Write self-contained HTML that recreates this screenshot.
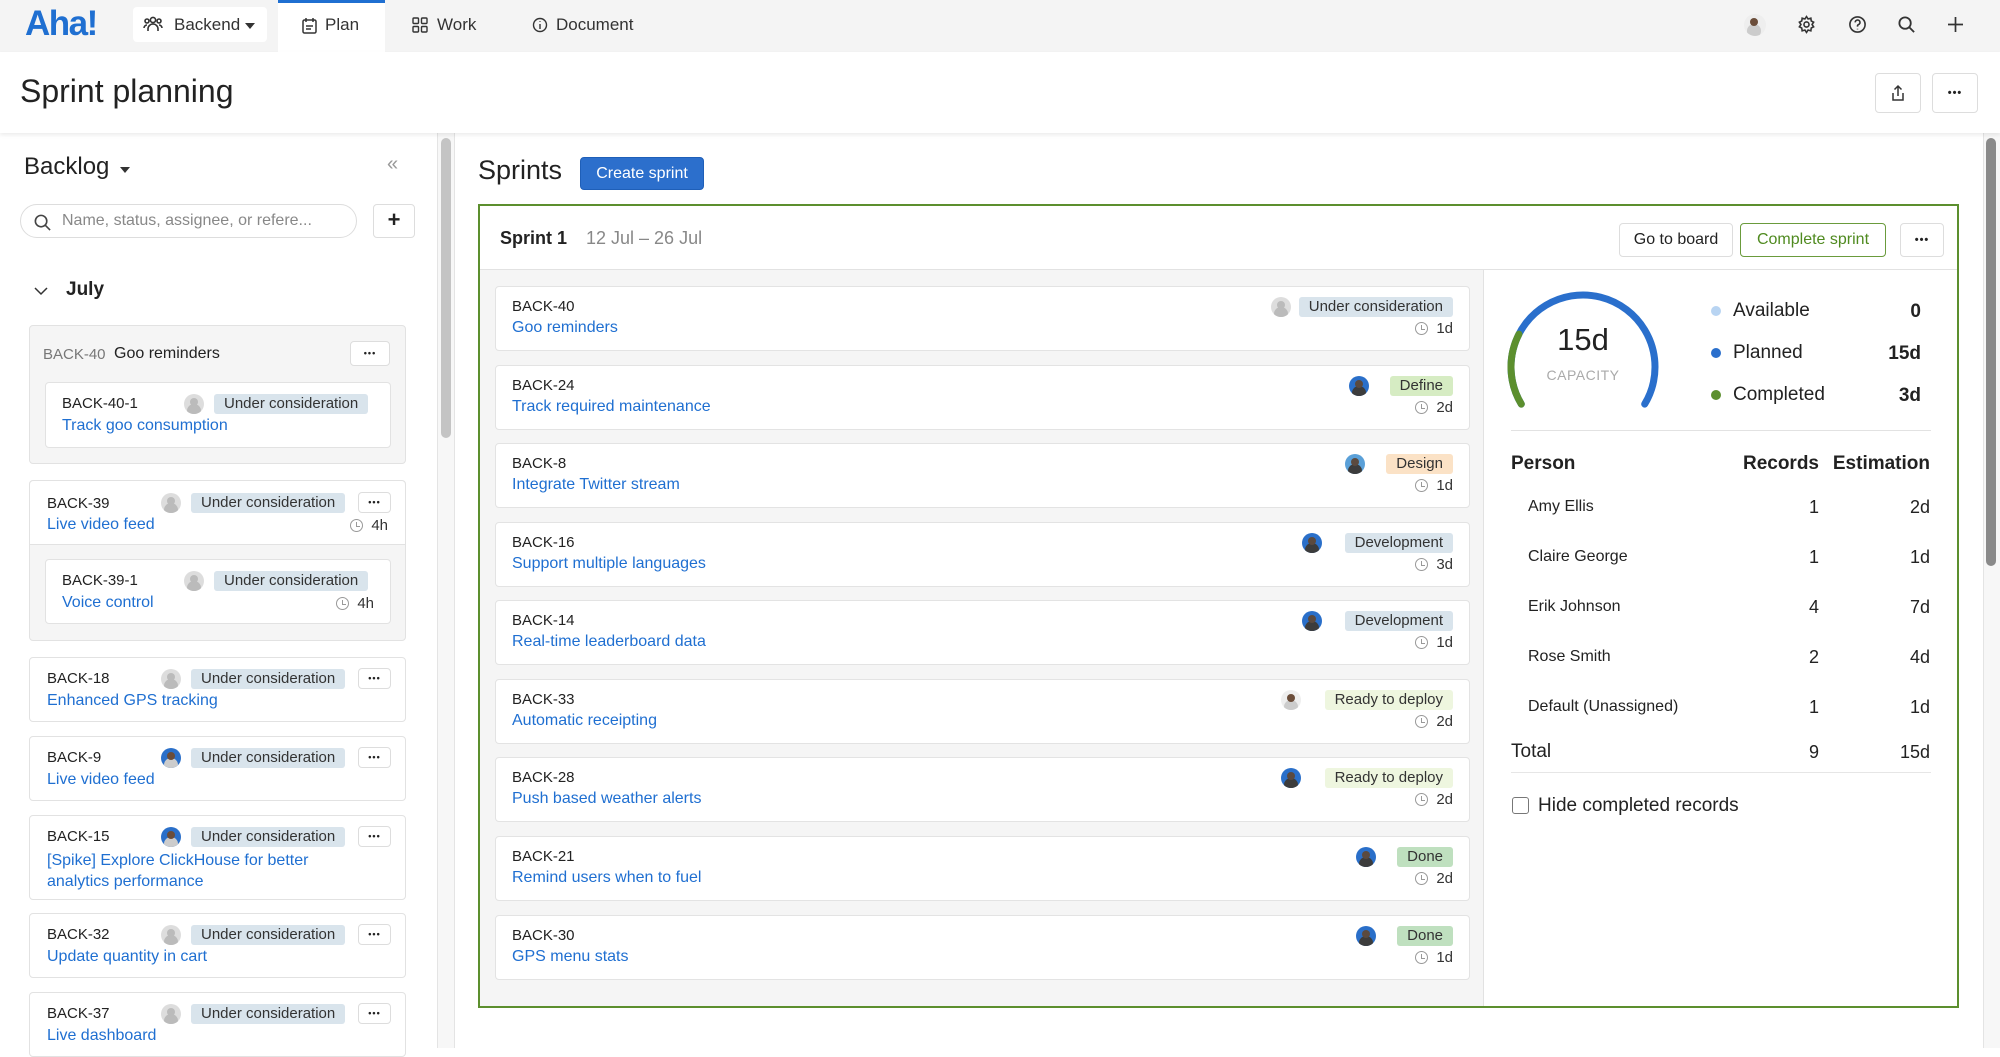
<!DOCTYPE html>
<html><head><meta charset="utf-8">
<style>
*{box-sizing:border-box;margin:0;padding:0}
body{width:2000px;height:1048px;overflow:hidden;background:#fff;font-family:"Liberation Sans",Arial,sans-serif;color:#222;position:relative}
.a{position:absolute}
.nav{left:0;top:0;width:2000px;height:52px;background:#f4f4f4}
.navt{font-size:17px;color:#333;top:15px}
.hdr{left:0;top:52px;width:2000px;height:81px;background:#fff;box-shadow:0 2px 4px rgba(0,0,0,.08);z-index:2}
.ibtn{border:1px solid #ddd;border-radius:4px;background:#fff;width:46px;height:40px;display:flex;align-items:center;justify-content:center}
.left{left:0;top:133px;width:437px;height:915px;background:#fff}
.link{color:#1f6fd1}
.pill{position:absolute;height:20px;line-height:20px;border-radius:3px;font-size:15px;padding:0 10px;color:#333;white-space:nowrap}
.uc{background:#d9e4ec}.def{background:#d6ecc3}.des{background:#fbe2c6}.rd{background:#eef6df}.dn{background:#bfe0bf}
.av{position:absolute;width:20px;height:20px;border-radius:50%;background:#ddd;overflow:hidden}
.av::after{content:"";position:absolute;left:6px;top:4px;width:8px;height:8px;border-radius:50%;background:#bbb;box-shadow:0 9px 0 3px #bbb}
.av.c{background:#2a6fc9}.av.c::after{background:#5b4a3f;box-shadow:0 9px 0 3px #3c3c3c}
.av.w{background:#eee}.av.w::after{background:#6b4d3a;box-shadow:0 9px 0 3px #ccc}
.dots{position:absolute;width:33px;height:21px;border:1px solid #ddd;border-radius:4px;background:#fff;font-size:9px;line-height:19px;text-align:center;font-weight:bold;letter-spacing:1px}
.bcard{position:absolute;left:29px;width:377px;border:1px solid #e2e2e2;border-radius:4px;background:#fff}
.id{position:absolute;font-size:15px;color:#222}
.tt{position:absolute;font-size:16px;color:#1f6fd1}
.tm{position:absolute;font-size:15px;color:#333;display:flex;align-items:center;gap:8px}
.clk{width:13px;height:13px;border:1.3px solid #999;border-radius:50%;position:relative}
.clk::after{content:"";position:absolute;left:4.5px;top:1.5px;width:3px;height:4px;border-left:1.3px solid #999;border-bottom:1.3px solid #999}
.scard{position:absolute;left:495px;width:975px;height:65px;background:#fff;border:1px solid #e3e3e3;border-radius:4px}
.scard .id{left:16px;top:11px}
.scard .tt{left:16px;top:32px}
.scard .pill{right:16px;top:10px}
.scard .tm{right:16px;top:33px}
.row{position:absolute;font-size:16px;color:#222}
</style></head><body>

<div class="a nav">
  <div class="a" style="left:25px;top:4px;font-size:35px;font-weight:bold;color:#1f6fd1;letter-spacing:-1.5px">Aha!</div>
  <div class="a" style="left:133px;top:7px;width:134px;height:35px;background:#fff;border-radius:4px"></div>
  <svg class="a" style="left:143px;top:15px" width="20" height="18" viewBox="0 0 20 18" fill="none" stroke="#333" stroke-width="1.6"><circle cx="10" cy="5" r="2.6"/><circle cx="4" cy="6" r="2"/><circle cx="16" cy="6" r="2"/><path d="M5 16v-2a5 5 0 0 1 10 0v2M1 13a3 3 0 0 1 3-3M19 13a3 3 0 0 0-3-3"/></svg>
  <div class="a navt" style="left:174px">Backend</div>
  <div class="a" style="left:245px;top:23px;border:5px solid transparent;border-top:6px solid #333"></div>
  <div class="a" style="left:278px;top:0;width:107px;height:52px;background:#fff;border-top:3px solid #1f6fd1"></div>
  <svg class="a" style="left:302px;top:17px" width="15" height="17" viewBox="0 0 15 17" fill="none" stroke="#333" stroke-width="1.5"><rect x="1" y="3" width="13" height="13" rx="1.5"/><path d="M4 1v4M11 1v4M4 9h7M4 12h5"/></svg>
  <div class="a navt" style="left:325px">Plan</div>
  <svg class="a" style="left:412px;top:17px" width="16" height="16" viewBox="0 0 16 16" fill="none" stroke="#333" stroke-width="1.4"><rect x="1" y="1" width="5.5" height="5.5" rx="1"/><rect x="9.5" y="1" width="5.5" height="5.5" rx="1"/><rect x="1" y="9.5" width="5.5" height="5.5" rx="1"/><rect x="9.5" y="9.5" width="5.5" height="5.5" rx="1"/></svg>
  <div class="a navt" style="left:437px">Work</div>
  <svg class="a" style="left:532px;top:17px" width="16" height="16" viewBox="0 0 16 16" fill="none" stroke="#333" stroke-width="1.4"><circle cx="8" cy="8" r="6.5"/><path d="M8 7v5M8 4.2v.8"/></svg>
  <div class="a navt" style="left:556px">Document</div>
  <div class="av w" style="left:1744px;top:14px;width:22px;height:22px"></div>
  <svg class="a" style="left:1797px;top:15px" width="19" height="19" viewBox="0 0 24 24" fill="none" stroke="#333" stroke-width="2"><circle cx="12" cy="12" r="3.2"/><path d="M12 2l2 3 3.5-1 .5 3.5L21 9l-2 3 2 3-3 1.5-.5 3.5-3.5-1-2 3-2-3-3.5 1L6 16.5 3 15l2-3-2-3 3-1.5L6.5 4 10 5z"/></svg>
  <svg class="a" style="left:1848px;top:15px" width="19" height="19" viewBox="0 0 20 20" fill="none" stroke="#333" stroke-width="1.7"><circle cx="10" cy="10" r="8"/><path d="M7.6 7.8a2.5 2.5 0 1 1 3.4 2.3c-.7.3-1 .8-1 1.5v.6M10 14.5v.6"/></svg>
  <svg class="a" style="left:1897px;top:15px" width="19" height="19" viewBox="0 0 20 20" fill="none" stroke="#333" stroke-width="1.9"><circle cx="8.5" cy="8.5" r="6"/><path d="M13 13l5 5"/></svg>
  <svg class="a" style="left:1947px;top:16px" width="17" height="17" viewBox="0 0 17 17" fill="none" stroke="#333" stroke-width="1.7"><path d="M8.5 1v15M1 8.5h15"/></svg>
</div>

<div class="a hdr">
  <div class="a" style="left:20px;top:21px;font-size:32px;color:#222">Sprint planning</div>
  <div class="a ibtn" style="left:1875px;top:21px"><svg width="16" height="18" viewBox="0 0 16 18" fill="none" stroke="#333" stroke-width="1.5"><path d="M8 12V2M4.5 5.5L8 2l3.5 3.5M3 9v7h10V9"/></svg></div>
  <div class="a ibtn" style="left:1932px;top:21px;font-weight:bold;font-size:11px;letter-spacing:1px">•••</div>
</div>

<div class="a left">
  <div class="a" style="left:24px;top:20px;font-size:24px">Backlog</div>
  <div class="a" style="left:120px;top:34px;border:5px solid transparent;border-top:6px solid #333"></div>
  <div class="a" style="left:387px;top:20px;font-size:20px;color:#999">«</div>
  <div class="a" style="left:20px;top:71px;width:337px;height:34px;border:1px solid #ddd;border-radius:17px"></div>
  <svg class="a" style="left:33px;top:80px" width="19" height="19" viewBox="0 0 20 20" fill="none" stroke="#444" stroke-width="1.7"><circle cx="8.5" cy="8.5" r="6"/><path d="M13 13l5 5"/></svg>
  <div class="a" style="left:62px;top:79px;font-size:16px;color:#888">Name, status, assignee, or refere...</div>
  <div class="a" style="left:373px;top:71px;width:42px;height:34px;border:1px solid #ddd;border-radius:4px;text-align:center;font-size:22px;line-height:30px;font-weight:bold">+</div>
  <svg class="a" style="left:34px;top:153px" width="14" height="10" viewBox="0 0 14 10" fill="none" stroke="#333" stroke-width="1.5"><path d="M1 2l6 6 6-6"/></svg>
  <div class="a" style="left:66px;top:146px;font-size:19px;font-weight:bold">July</div>
</div>

<div class="bcard" style="top:325px;height:139px;background:#f5f5f5">
  <div class="id" style="left:13px;top:20px;color:#777">BACK-40</div>
  <div class="a" style="left:84px;top:19px;font-size:16px">Goo reminders</div>
  <div class="dots" style="left:320px;top:15px;height:25px;width:40px;line-height:23px">•••</div>
  <div class="a" style="left:15px;top:56px;width:346px;height:66px;background:#fff;border:1px solid #e2e2e2;border-radius:4px">
    <div class="id" style="left:16px;top:12px">BACK-40-1</div>
    <div class="tt" style="left:16px;top:34px">Track goo consumption</div>
    <div class="av" style="left:138px;top:11px"></div>
    <div class="pill uc" style="left:168px;top:11px">Under consideration</div>
  </div>
</div>
<div class="bcard" style="top:480px;height:161px;background:#f5f5f5">
  <div class="a" style="left:0;top:0;width:375px;height:64px;background:#fff;border-bottom:1px solid #e2e2e2;border-radius:4px 4px 0 0"></div>
  <div class="id" style="left:17px;top:14px">BACK-39</div>
  <div class="tt" style="left:17px;top:35px">Live video feed</div>
  <div class="av" style="left:131px;top:12px"></div>
  <div class="pill uc" style="left:161px;top:12px">Under consideration</div>
  <div class="dots" style="left:328px;top:11px">•••</div>
  <div class="tm" style="right:17px;top:36px"><span class="clk"></span>4h</div>
  <div class="a" style="left:15px;top:78px;width:346px;height:65px;background:#fff;border:1px solid #e2e2e2;border-radius:4px">
    <div class="id" style="left:16px;top:12px">BACK-39-1</div>
    <div class="tt" style="left:16px;top:34px">Voice control</div>
    <div class="av" style="left:138px;top:11px"></div>
    <div class="pill uc" style="left:168px;top:11px">Under consideration</div>
    <div class="tm" style="right:16px;top:35px"><span class="clk"></span>4h</div>
  </div>
</div>
<div class="bcard" style="top:657px;height:65px">
  <div class="id" style="left:17px;top:12px">BACK-18</div><div class="tt" style="left:17px;top:34px">Enhanced GPS tracking</div>
  <div class="av" style="left:131px;top:11px"></div><div class="pill uc" style="left:161px;top:11px">Under consideration</div><div class="dots" style="left:328px;top:10px">•••</div>
</div>
<div class="bcard" style="top:736px;height:65px">
  <div class="id" style="left:17px;top:12px">BACK-9</div><div class="tt" style="left:17px;top:34px">Live video feed</div>
  <div class="av w" style="left:131px;top:11px;background:#2a6fc9"></div><div class="pill uc" style="left:161px;top:11px">Under consideration</div><div class="dots" style="left:328px;top:10px">•••</div>
</div>
<div class="bcard" style="top:815px;height:85px">
  <div class="id" style="left:17px;top:12px">BACK-15</div><div class="tt" style="left:17px;top:34px;line-height:21px">[Spike] Explore ClickHouse for better<br>analytics performance</div>
  <div class="av w" style="left:131px;top:11px;background:#2a6fc9"></div><div class="pill uc" style="left:161px;top:11px">Under consideration</div><div class="dots" style="left:328px;top:10px">•••</div>
</div>
<div class="bcard" style="top:913px;height:65px">
  <div class="id" style="left:17px;top:12px">BACK-32</div><div class="tt" style="left:17px;top:34px">Update quantity in cart</div>
  <div class="av" style="left:131px;top:11px"></div><div class="pill uc" style="left:161px;top:11px">Under consideration</div><div class="dots" style="left:328px;top:10px">•••</div>
</div>
<div class="bcard" style="top:992px;height:65px">
  <div class="id" style="left:17px;top:12px">BACK-37</div><div class="tt" style="left:17px;top:34px">Live dashboard</div>
  <div class="av" style="left:131px;top:11px"></div><div class="pill uc" style="left:161px;top:11px">Under consideration</div><div class="dots" style="left:328px;top:10px">•••</div>
</div>

<div class="a" style="left:437px;top:133px;width:18px;height:915px;background:#f7f7f7;border-left:1px solid #e4e4e4;border-right:1px solid #e4e4e4"></div>
<div class="a" style="left:441px;top:138px;width:10px;height:300px;background:#c4c4c4;border-radius:5px"></div>
<div class="a" style="left:1983px;top:133px;width:17px;height:915px;background:#f7f7f7;border-left:1px solid #e4e4e4"></div>
<div class="a" style="left:1986px;top:138px;width:10px;height:428px;background:#8a8a8a;border-radius:5px"></div>

<div class="a" style="left:478px;top:155px;font-size:27px">Sprints</div>
<div class="a" style="left:580px;top:157px;width:124px;height:33px;background:#2c6fcc;border:1px solid #1f5fb8;border-radius:4px;color:#fff;font-size:16px;text-align:center;line-height:31px">Create sprint</div>

<div class="a" style="left:478px;top:204px;width:1481px;height:804px;border:2px solid #5c8f2e;background:#fff"></div>
<div class="a" style="left:480px;top:269px;width:1477px;height:1px;background:#e2e2e2"></div>
<div class="a" style="left:480px;top:270px;width:1004px;height:736px;background:#f5f5f5;border-right:1px solid #e2e2e2"></div>
<div class="a" style="left:500px;top:228px;font-size:18px;font-weight:bold">Sprint 1</div>
<div class="a" style="left:586px;top:228px;font-size:18px;color:#888">12 Jul – 26 Jul</div>
<div class="a" style="left:1619px;top:223px;width:114px;height:34px;border:1px solid #ddd;border-radius:4px;font-size:16px;text-align:center;line-height:32px">Go to board</div>
<div class="a" style="left:1740px;top:223px;width:146px;height:34px;border:1.5px solid #6a9b3c;border-radius:4px;font-size:16px;text-align:center;line-height:31px;color:#4f8a1f">Complete sprint</div>
<div class="a" style="left:1900px;top:223px;width:44px;height:34px;border:1px solid #ddd;border-radius:4px;font-size:11px;text-align:center;line-height:32px;font-weight:bold;letter-spacing:1px">•••</div>

<div class="scard" style="top:286px"><div class="id">BACK-40</div><div class="tt">Goo reminders</div><div class="av" style="right:178px;top:10px"></div><div class="pill uc">Under consideration</div><div class="tm"><span class="clk"></span>1d</div></div>
<div class="scard" style="top:365px"><div class="id">BACK-24</div><div class="tt">Track required maintenance</div><div class="av c" style="right:100px;top:10px"></div><div class="pill def">Define</div><div class="tm"><span class="clk"></span>2d</div></div>
<div class="scard" style="top:443px"><div class="id">BACK-8</div><div class="tt">Integrate Twitter stream</div><div class="av c" style="right:104px;top:10px;background:#5aa0d8"></div><div class="pill des">Design</div><div class="tm"><span class="clk"></span>1d</div></div>
<div class="scard" style="top:522px"><div class="id">BACK-16</div><div class="tt">Support multiple languages</div><div class="av c" style="right:147px;top:10px"></div><div class="pill uc">Development</div><div class="tm"><span class="clk"></span>3d</div></div>
<div class="scard" style="top:600px"><div class="id">BACK-14</div><div class="tt">Real-time leaderboard data</div><div class="av c" style="right:147px;top:10px"></div><div class="pill uc">Development</div><div class="tm"><span class="clk"></span>1d</div></div>
<div class="scard" style="top:679px"><div class="id">BACK-33</div><div class="tt">Automatic receipting</div><div class="av w" style="right:168px;top:10px"></div><div class="pill rd">Ready to deploy</div><div class="tm"><span class="clk"></span>2d</div></div>
<div class="scard" style="top:757px"><div class="id">BACK-28</div><div class="tt">Push based weather alerts</div><div class="av c" style="right:168px;top:10px"></div><div class="pill rd">Ready to deploy</div><div class="tm"><span class="clk"></span>2d</div></div>
<div class="scard" style="top:836px"><div class="id">BACK-21</div><div class="tt">Remind users when to fuel</div><div class="av c" style="right:93px;top:10px"></div><div class="pill dn">Done</div><div class="tm"><span class="clk"></span>2d</div></div>
<div class="scard" style="top:915px"><div class="id">BACK-30</div><div class="tt">GPS menu stats</div><div class="av c" style="right:93px;top:10px"></div><div class="pill dn">Done</div><div class="tm"><span class="clk"></span>1d</div></div>

<svg class="a" style="left:1493px;top:277px" width="180" height="180" viewBox="0 0 180 180" fill="none">
  <circle cx="90" cy="90" r="72" stroke="#2a6fcc" stroke-width="7" stroke-linecap="round" stroke-dasharray="304 1000" transform="rotate(149 90 90)"/>
  <circle cx="90" cy="90" r="72" stroke="#5c8f2e" stroke-width="7" stroke-linecap="round" stroke-dasharray="73 1000" transform="rotate(149 90 90)"/>
</svg>
<div class="a" style="left:1533px;top:322px;width:100px;text-align:center;font-size:31px">15d</div>
<div class="a" style="left:1533px;top:367px;width:100px;text-align:center;font-size:14px;color:#aaa;letter-spacing:.5px">CAPACITY</div>
<div class="a" style="left:1711px;top:306px;width:10px;height:10px;border-radius:50%;background:#b8d4f2"></div>
<div class="a" style="left:1711px;top:348px;width:10px;height:10px;border-radius:50%;background:#2a6fcc"></div>
<div class="a" style="left:1711px;top:390px;width:10px;height:10px;border-radius:50%;background:#5c8f2e"></div>
<div class="row" style="left:1733px;top:300px;font-size:19px">Available</div>
<div class="row" style="left:1733px;top:342px;font-size:19px">Planned</div>
<div class="row" style="left:1733px;top:384px;font-size:19px">Completed</div>
<div class="row" style="right:79px;top:301px;font-size:19px;font-weight:bold">0</div>
<div class="row" style="right:79px;top:343px;font-size:19px;font-weight:bold">15d</div>
<div class="row" style="right:79px;top:385px;font-size:19px;font-weight:bold">3d</div>
<div class="a" style="left:1511px;top:430px;width:420px;height:1px;background:#e2e2e2"></div>
<div class="row" style="left:1511px;top:453px;font-size:19px;font-weight:bold">Person</div>
<div class="row" style="right:181px;top:453px;font-size:19px;font-weight:bold">Records</div>
<div class="row" style="right:70px;top:453px;font-size:19px;font-weight:bold">Estimation</div>
<div class="row" style="left:1528px;top:498px">Amy Ellis</div><div class="row" style="right:181px;top:497px;font-size:18px">1</div><div class="row" style="right:70px;top:497px;font-size:18px">2d</div>
<div class="row" style="left:1528px;top:548px">Claire George</div><div class="row" style="right:181px;top:547px;font-size:18px">1</div><div class="row" style="right:70px;top:547px;font-size:18px">1d</div>
<div class="row" style="left:1528px;top:598px">Erik Johnson</div><div class="row" style="right:181px;top:597px;font-size:18px">4</div><div class="row" style="right:70px;top:597px;font-size:18px">7d</div>
<div class="row" style="left:1528px;top:648px">Rose Smith</div><div class="row" style="right:181px;top:647px;font-size:18px">2</div><div class="row" style="right:70px;top:647px;font-size:18px">4d</div>
<div class="row" style="left:1528px;top:698px">Default (Unassigned)</div><div class="row" style="right:181px;top:697px;font-size:18px">1</div><div class="row" style="right:70px;top:697px;font-size:18px">1d</div>
<div class="row" style="left:1511px;top:741px;font-size:19px">Total</div><div class="row" style="right:181px;top:742px;font-size:18px">9</div><div class="row" style="right:70px;top:742px;font-size:18px">15d</div>
<div class="a" style="left:1511px;top:772px;width:420px;height:1px;background:#e6e6e6"></div>
<div class="a" style="left:1512px;top:797px;width:17px;height:17px;border:1.5px solid #777;border-radius:3px"></div>
<div class="row" style="left:1538px;top:795px;font-size:19px">Hide completed records</div>
</body></html>
